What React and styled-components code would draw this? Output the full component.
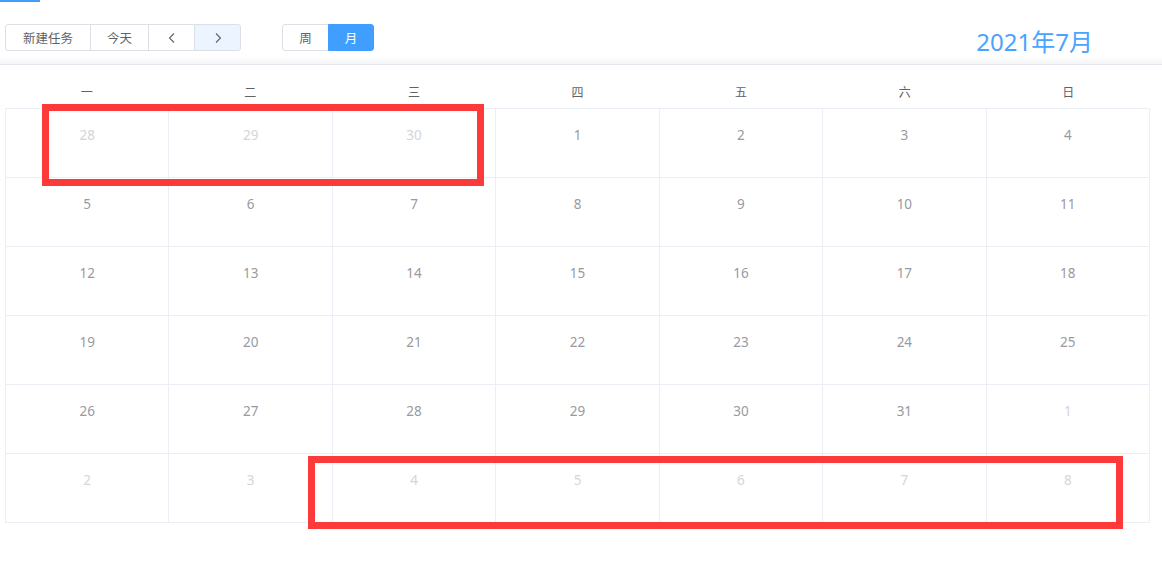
import styled, { createGlobalStyle } from 'styled-components';

const GlobalStyle = createGlobalStyle`
  body {
    margin: 0;
    background: #fff;
    font-family: "Noto Sans", "Noto Sans CJK SC", sans-serif;
  }
`;

const Page = styled.div`
  position: relative;
  width: 1162px;
  height: 563px;
  overflow: hidden;
  background: #fff;
`;

const TabLine = styled.div`
  width: 40px;
  height: 2px;
  background: #409eff;
`;

const Toolbar = styled.div`
  display: flex;
  align-items: flex-start;
  height: 63px;
  padding: 22px 0 0 5px;
  box-sizing: border-box;
  border-bottom: 1px solid #e4e7ed;
  background: linear-gradient(to bottom, #fff 0, #fff 54px, #f4f5f8 62px);
`;

const Group = styled.div`
  display: flex;
  margin-right: ${p => p.gap || 0}px;
`;

const Btn = styled.button`
  width: ${p => p.w}px;
  height: 27px;
  box-sizing: border-box;
  border: 1px solid #dcdfe6;
  margin-left: -1px;
  padding: 0;
  background: ${p => (p.active ? '#409eff' : p.hover ? '#ecf5ff' : '#fff')};
  border-color: ${p => (p.active ? '#409eff' : '#dcdfe6')};
  color: ${p => (p.active ? '#fff' : '#606266')};
  font-family: "Noto Sans CJK SC", sans-serif;
  font-size: 12.5px;
  display: flex;
  align-items: center;
  justify-content: center;
  &:first-child {
    margin-left: 0;
    border-radius: 3px 0 0 3px;
  }
  &:last-child {
    border-radius: 0 3px 3px 0;
  }
`;

const Title = styled.div`
  margin-left: auto;
  margin-right: 69px;
  margin-top: 3px;
  font-size: 24px;
  line-height: 30px;
  color: #4aa3ff;
  font-family: "Noto Sans", "Noto Sans CJK SC", sans-serif;
`;

const Calendar = styled.div`
  margin: 0 12px 0 5px;
`;

const WeekHead = styled.div`
  display: grid;
  grid-template-columns: repeat(7, 1fr);
  height: 43px;
`;

const WeekLabel = styled.div`
  display: flex;
  align-items: flex-end;
  justify-content: center;
  padding-bottom: 8px;
  font-size: 12px;
  color: #606266;
  font-family: "Noto Sans CJK SC", sans-serif;
`;

const Grid = styled.div`
  display: grid;
  grid-template-columns: repeat(7, 1fr);
  border-top: 1px solid #ebeef5;
  border-left: 1px solid #ebeef5;
`;

const Cell = styled.div`
  height: 69px;
  border-right: 1px solid #ebeef5;
  border-bottom: 1px solid #ebeef5;
  text-align: center;
  padding-top: 16px;
  box-sizing: border-box;
  font-size: 13.5px;
  line-height: 20px;
  color: ${p => (p.other ? '#d4d5da' : '#999aa0')};
`;

const Mark = styled.div`
  position: absolute;
  left: ${p => p.x}px;
  top: ${p => p.y}px;
  width: ${p => p.w}px;
  height: ${p => p.h}px;
  border: 7px solid #fd3a3a;
  box-sizing: border-box;
  pointer-events: none;
`;

const weekdays = ['一', '二', '三', '四', '五', '六', '日'];

const days = [];
[28, 29, 30].forEach(d => days.push({ d, other: true }));
for (let d = 1; d <= 31; d++) days.push({ d, other: false });
for (let d = 1; d <= 8; d++) days.push({ d, other: true });

const Chevron = ({ dir }) => (
  <svg width="10" height="12" viewBox="0 0 10 12" fill="none" stroke="#606266" strokeWidth="1.1">
    {dir === 'left' ? <path d="M7 1.5 L2.5 6 L7 10.5" /> : <path d="M3 1.5 L7.5 6 L3 10.5" />}
  </svg>
);

export default function App() {
  return (
    <Page>
      <GlobalStyle />
      <TabLine />
      <Toolbar>
        <Group gap={41}>
          <Btn w={86}>新建任务</Btn>
          <Btn w={59}>今天</Btn>
          <Btn w={47}><Chevron dir="left" /></Btn>
          <Btn w={47} hover><Chevron dir="right" /></Btn>
        </Group>
        <Group>
          <Btn w={47}>周</Btn>
          <Btn w={46} active>月</Btn>
        </Group>
        <Title>2021年7月</Title>
      </Toolbar>
      <Calendar>
        <WeekHead>
          {weekdays.map(w => <WeekLabel key={w}>{w}</WeekLabel>)}
        </WeekHead>
        <Grid>
          {days.map((x, i) => (
            <Cell key={i} other={x.other}>{x.d}</Cell>
          ))}
        </Grid>
      </Calendar>
      <Mark x={42} y={104} w={442} h={82} />
      <Mark x={308} y={456} w={815} h={73} />
    </Page>
  );
}
